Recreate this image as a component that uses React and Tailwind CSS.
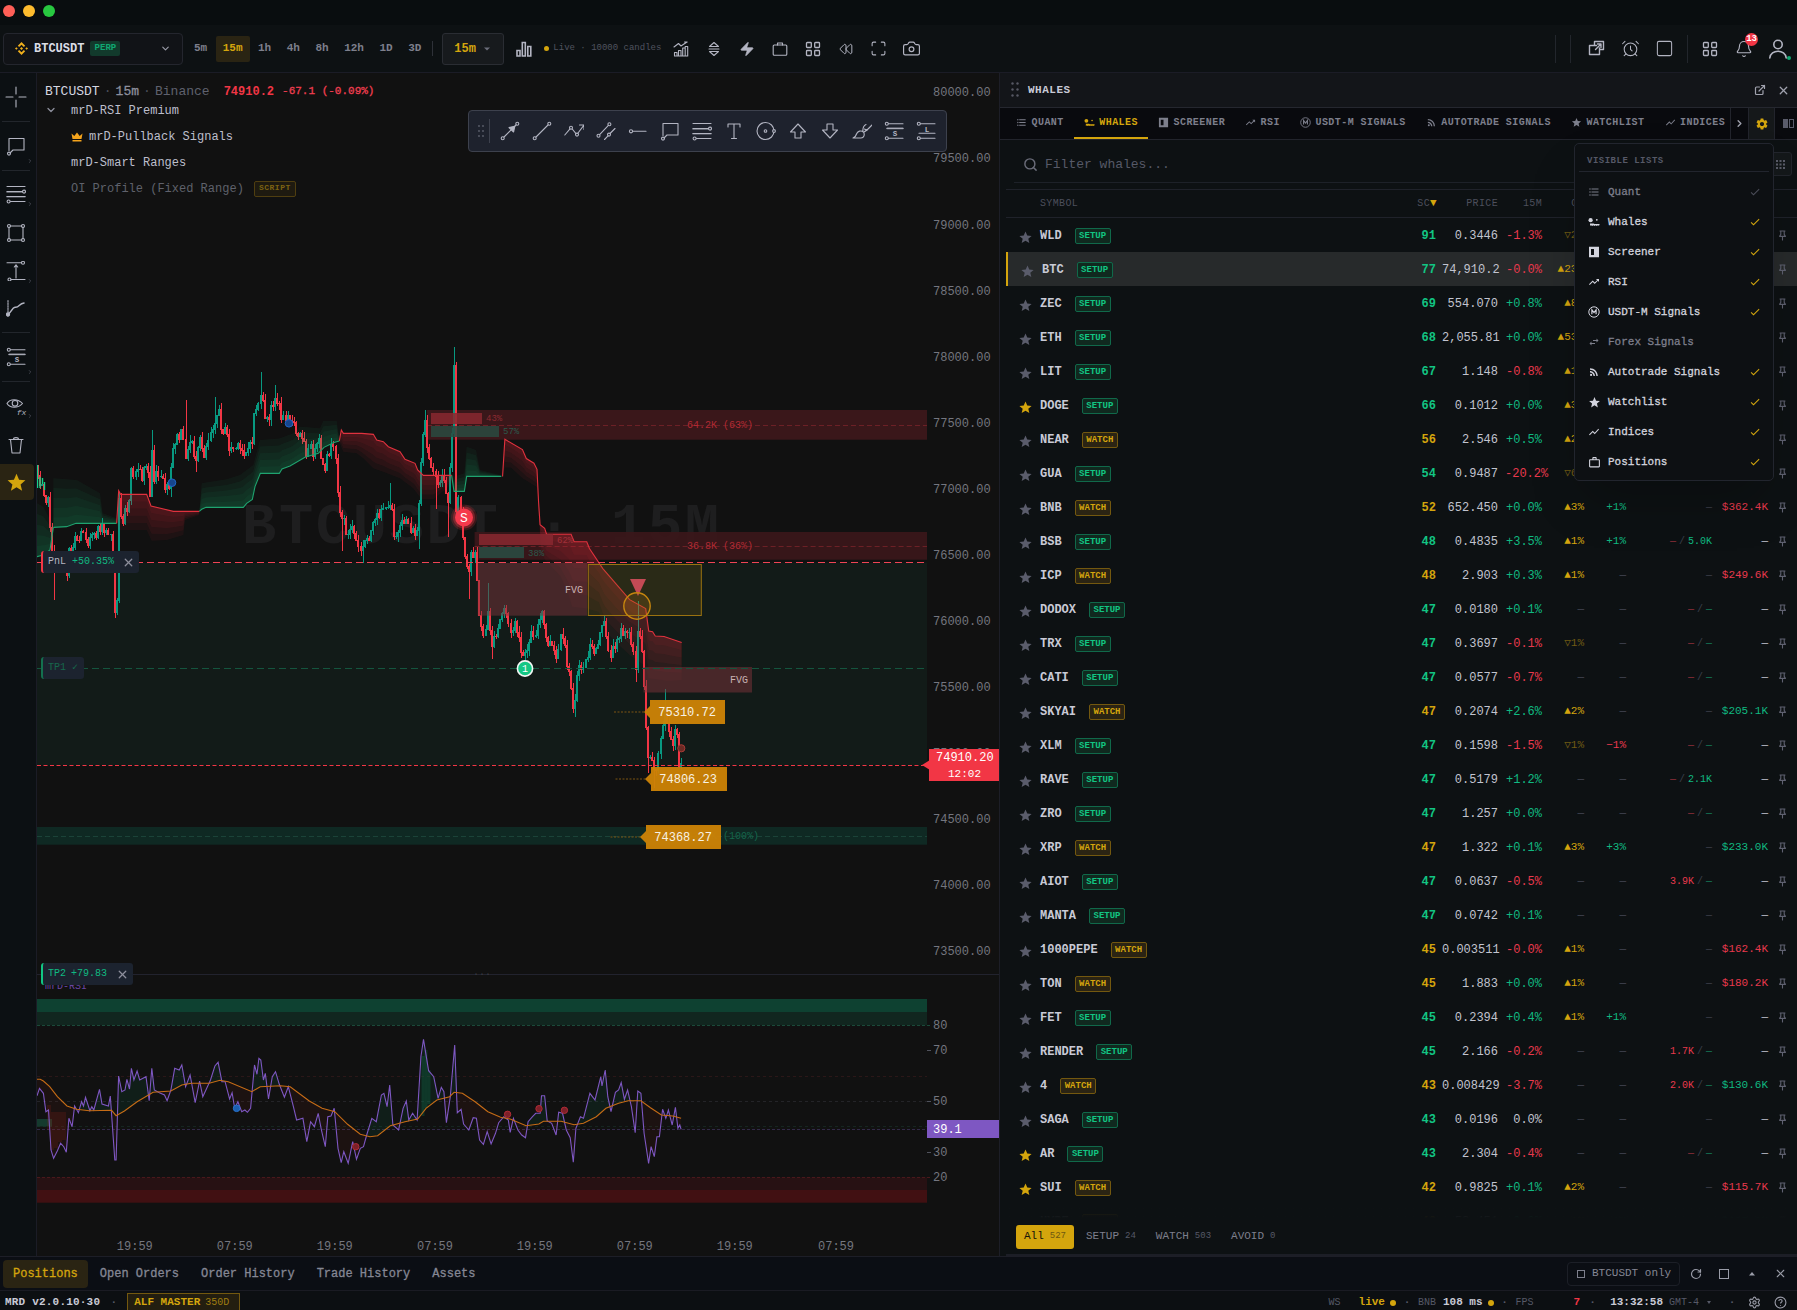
import React from "react";
import { ChevronDown, ChevronRight, Zap, Rewind, Maximize, Camera, Search, Bell, ExternalLink, X, AlarmClock, Square, RotateCw, Settings } from "lucide-react";
import { MdFormatListBulleted, MdTrendingUp, MdRssFeed, MdStar, MdShowChart, MdWorkOutline, MdSettings, MdSwapHoriz, MdCheck } from "react-icons/md";

const MONO = "'Liberation Mono', 'DejaVu Sans Mono', monospace";

/* ---------- small icons ---------- */
const S = ({ children, size = 20, className = "", sw = 1.1, vb = "0 0 20 20" }) => (
  <svg width={size} height={size} viewBox={vb} fill="none" stroke="currentColor" strokeWidth={sw} strokeLinecap="round" strokeLinejoin="round" className={"shrink-0 " + className}>
    {children}
  </svg>
);

const ArrowLineIcon = () => <S><circle cx="2.7" cy="17.3" r="1.5" /><circle cx="17.3" cy="2.7" r="1.5" /><path d="M4 16 16 4" /><path d="M14.8 5.2 13.6 11 9 6.6Z" fill="currentColor" /></S>;
const LineIcon = () => <S><circle cx="2.7" cy="17.3" r="1.5" /><circle cx="17.3" cy="2.7" r="1.5" /><path d="M4 16 16 4" /></S>;
const PathIcon = () => <S><path d="M0.8 14 6 7.8M8.2 8 12 12.6M14 12 20 4M15.5 4H20V8.5" /><circle cx="7" cy="6.8" r="1.5" /><circle cx="13" cy="13.6" r="1.5" /></S>;
const ParallelIcon = () => <S><path d="M3.6 13.6 12.4 4.4M14 12.5 19 7.5M12 14.8 8.5 18.5" /><circle cx="2.5" cy="14.8" r="1.5" /><circle cx="13.4" cy="3.2" r="1.5" /><circle cx="13" cy="13.6" r="1.5" /></S>;
const RayIcon = () => <S><circle cx="3" cy="10.3" r="1.6" /><path d="M4.8 10.3H18" /></S>;
const NoteIcon = () => <S><path d="M3 14.5V2.5H18V14H7L4 17" /><circle cx="3" cy="17.6" r="1.5" /></S>;
const FibIcon = () => <S><path d="M1 2.5H19M1 7.5H16.5M1 12.5H19M4.5 17.5H19" /><path d="M1 8H16.5M1 12.8H19" strokeWidth="1.6" opacity=".6" /><circle cx="18" cy="7.6" r="1.5" /><circle cx="2.6" cy="17.5" r="1.5" /></S>;
const TextIcon = () => <S><path d="M4 6V3H16V6M10 3V17.5M7.5 17.5H12.5" /></S>;
const CircleIcon = () => <S><circle cx="9.5" cy="10" r="8.5" /><circle cx="9.5" cy="10" r="1.3" /><circle cx="18" cy="10" r="1.4" fill="#1e222d" /></S>;
const UpIcon = () => <S><path d="M10 3 17.5 11H13V17H7V11H2.5Z" /></S>;
const DownIcon = () => <S><path d="M10 17 17.5 9H13V3H7V9H2.5Z" /></S>;
const BrushIcon = () => <S><path d="M1 17H9C12 17 13 13.5 11.5 11 9 9 5.5 10 4.5 13 4 15 2.5 16.5 1 17ZM11 11C10.5 7 12 4.5 14 3.5M12 11C15 9.5 18 6 20 4M12.5 8 15 9.5" /></S>;
const FibLetterIcon = ({ l }) => (
  <S><path d="M4.5 2.8H19M3 7.3H19M4.5 17.3H19" /><path d="M3 7.5H19" strokeWidth="1.4" opacity=".7" /><circle cx="2.8" cy="2.8" r="1.5" /><circle cx="2.8" cy="17.3" r="1.5" />
    <text x="11" y="15" fontSize="7.5" fontFamily={MONO} fontWeight="700" textAnchor="middle" fill="currentColor" stroke="none">{l}</text></S>
);
const FibLIcon = () => (
  <S><path d="M4.5 2.8H19M3 12.3H19M4.5 17.3H19" /><circle cx="2.8" cy="2.8" r="1.5" /><circle cx="2.8" cy="17.3" r="1.5" />
    <text x="11" y="10.5" fontSize="7.5" fontFamily={MONO} fontWeight="700" textAnchor="middle" fill="currentColor" stroke="none">L</text></S>
);
const CrossIcon = () => <S size={22} vb="0 0 22 22"><path d="M11 1V8M11 14V21M1 11H8M14 11H21" /></S>;
const RectIcon = () => <S size={20}><path d="M4.2 3H15.8M4.2 17H15.8M3 4.2V15.8M17 4.2V15.8" /><circle cx="3" cy="3" r="1.5" /><circle cx="17" cy="3" r="1.5" /><circle cx="3" cy="17" r="1.5" /><circle cx="17" cy="17" r="1.5" /></S>;
const RangeIcon = () => <S size={20}><path d="M1 1.8H15.5M5 18.5H19M10 17V4M8.3 6 10 3.8 11.7 6" /><circle cx="17" cy="1.8" r="1.5" /><circle cx="3.5" cy="18.5" r="1.5" /></S>;
const ProjIcon = () => <S size={20}><path d="M2 1.5V17" strokeDasharray="1.5 1" /><path d="M2 15C5 14 6 8.5 9 8.2 13 9 13 4.5 18 4" strokeWidth="1.5" /><circle cx="2" cy="15.5" r="1.6" fill="currentColor" /></S>;
const EyeFxIcon = () => <S size={22} vb="0 0 22 22"><path d="M2 8.5C5 3.5 13 3.5 17.5 8.5 13 13.5 5 13.5 2 8.5Z" /><circle cx="10" cy="8.3" r="2.8" />
  <text x="16.5" y="20" fontSize="8" fontFamily={MONO} fontStyle="italic" textAnchor="middle" fill="currentColor" stroke="none">fx</text></S>;
const TrashIcon = () => <S size={20}><path d="M3 4.5H17M4.5 4.5 6 18H14L15.5 4.5M7.5 4.3C7.5 2 12.5 2 12.5 4.3" /></S>;
const StarIcon = ({ size = 20, className }) => <svg width={size} height={size} viewBox="0 0 20 20" className={"shrink-0 " + className}><path fill="currentColor" d="M10 .8 12.7 7 19.4 7.6 14.3 12 15.9 18.6 10 15.1 4.1 18.6 5.7 12 .6 7.6 7.3 7Z" /></svg>;
const WhaleIcon = ({ size = 11 }) => <svg width={size} height={size} viewBox="0 0 12 12" fill="currentColor" className="shrink-0"><circle cx="2.6" cy="4.2" r="2.1" /><circle cx="8.8" cy="3.8" r=".9" /><path d="M2 7.4H5.5L6.5 7.9H11.5V9L10.7 9.8 9.8 9.2 8.7 9.9 7.6 9.2 6.4 9.9 5.3 9.2 4.2 9.9 3 9.2 2 9.8Z" /></svg>;
const ScreenerIcon = ({ size = 11 }) => <svg width={size} height={size} viewBox="0 0 12 12" className="shrink-0"><path fill="currentColor" fillRule="evenodd" d="M1 .8H11V11.2H1ZM3 3V9H6V3Z" /></svg>;
const MIcon = ({ size = 11 }) => <svg width={size} height={size} viewBox="0 0 12 12" fill="none" stroke="currentColor" className="shrink-0"><circle cx="6" cy="6" r="5.2" strokeWidth="1" /><path d="M3.9 8.3V3.8L6 6.6 8.1 3.8V8.3" strokeWidth="1.2" /></svg>;
const GridIcon = ({ size = 16 }) => <S size={size} vb="0 0 16 16" sw={1.3}><rect x="1.5" y="1.5" width="4.8" height="5" rx=".8" /><rect x="9.7" y="1.5" width="4.8" height="5" rx=".8" /><rect x="1.5" y="9.5" width="4.8" height="5" rx=".8" /><rect x="9.7" y="9.5" width="4.8" height="5" rx=".8" /></S>;
const PinIcon = () => <S size={11} vb="0 0 11 11" sw={1.1} className="ml-[2px] text-[#5f6170]"><path d="M3 1H8M3.8 1.2V4.4L2.6 6.4H8.4L7.2 4.4V1.2M5.5 6.6V10" /></S>;

/* ---------- chart data ---------- */
const lerpAt = (pts, x) => {
  if (x <= pts[0][0]) return pts[0][1];
  for (let i = 1; i < pts.length; i++) {
    if (x <= pts[i][0]) {
      const [x0, y0] = pts[i - 1];
      const [x1, y1] = pts[i];
      return x1 === x0 ? y1 : y0 + ((y1 - y0) * (x - x0)) / (x1 - x0);
    }
  }
  return pts[pts.length - 1][1];
};
const pairs = (s) => s.trim().split(/\s+/).map((p) => p.split(",").map(Number));
const mapA = ([x, y]) => [x / 3, 220 + y / 3];
const mapB = ([x, y]) => [400 + x / 2.613, 330 + y / 2.8];
const mapR = ([x, y]) => [x / 1.568, 900 + y / 3];

const closePath = [
  ...pairs("111,740 115,790 120,775 128,780 133,820 138,830 145,850 150,900 155,990 160,1050 170,1010 185,1020 200,1060 205,980 215,990 225,940 235,965 250,925 262,960 275,950 283,960 295,915 305,925 315,940 330,930 337,1000 343,1160 350,1165 353,1000 355,830 368,900 378,830 385,895 395,745 405,765 412,740 425,770 432,730 445,760 450,840 455,665 463,780 472,765 485,785 495,800 505,820 512,760 522,660 535,655 543,640 560,710 573,645 588,735 600,660 612,700 625,650 643,595 655,575 665,620 680,640 690,690 705,680 715,690 730,690 745,685 755,680 763,580 775,545 785,540 793,580 805,615 815,550 826,530 840,570 850,600 862,565 872,600 882,620 895,655 905,640 915,650 920,700 930,685 945,700 955,660 963,710 975,770 985,690 998,685 1008,730 1018,870 1030,900 1045,950 1056,910 1065,950 1075,985 1087,990 1095,960 1110,940 1125,910 1140,870 1150,855 1160,890 1168,835 1178,870 1182,940 1195,945 1205,920 1218,890 1230,920 1240,940 1255,935 1258,780 1265,730 1270,640 1275,600 1280,680 1290,715 1300,740 1310,810 1320,770 1335,775 1343,880 1350,740 1358,600 1363,440 1369,870 1375,830 1385,900 1390,1000 1405,1075 1412,1000 1425,990 1432,1080").map(mapA),
  ...pairs("205,800 215,840 222,850 230,790 240,880 252,860 262,810 275,770 290,860 300,810 310,870 315,905 328,915 338,860 355,840 372,795 382,870 395,880 408,925 420,865 430,890 440,960 448,1010 455,1065 460,985 470,950 485,930 495,890 510,900 520,860 535,820 550,920 565,860 580,840 590,860 600,835 610,900 617,970 621,850 630,860 637,980 643,1110 650,1230 655,1160 665,1240 675,1190 685,1120 692,1060 700,1110 712,1180 722,1090 727,1200 736,1218").map(mapB),
];
const highs = [...pairs("111,735 556,540 454,630 643,530 661,548 781,457 826,495 1363,382 1369,425 1168,790 1276,570").map(mapA), ...pairs("228,707 621,760 694,1005").map(mapB)];
const lows = [...pairs("160,1140 349,1183 1087,1030 1307,868 1405,1138 1345,950 1025,993 1255,988 586,755 512,830").map(mapA), ...pairs("239,922 455,1083 650,1240 665,1283 617,986").map(mapB)];

const STEP = 2.0835;
const candles = (() => {
  let seed = 7;
  const rnd = () => ((seed = (seed * 1103515245 + 12345) % 2147483648) / 2147483648);
  const out = [];
  let prev = lerpAt(closePath, 36);
  for (let x = 37.6; x < 682.5; x += STEP) {
    const c = lerpAt(closePath, x) + (rnd() - 0.5) * 12;
    let hi = Math.min(prev, c) - rnd() * 6.5;
    let lo = Math.max(prev, c) + rnd() * 6.5;
    highs.forEach(([hx, hy]) => { if (Math.abs(hx - x) <= STEP / 2) hi = Math.min(hi, hy); });
    lows.forEach(([lx, ly]) => { if (Math.abs(lx - x) <= STEP / 2) lo = Math.max(lo, ly); });
    out.push({ x, o: prev, c, hi, lo });
    prev = c;
  }
  return out;
})();
const candlePath = (up, wick) =>
  candles.filter((k) => (k.c <= k.o) === up).map((k) => {
    const px = Math.round(k.x);
    return wick
      ? `M${px + 0.5} ${k.hi.toFixed(1)}V${k.lo.toFixed(1)}`
      : `M${px} ${Math.min(k.o, k.c).toFixed(1)}V${(Math.max(k.o, k.c) + 1).toFixed(1)}`;
  }).join("");

const bands = [
  { c: "g", m: mapA, l: "111,1010 130,1005 150,990 160,922", o: "111,850 130,860 150,900 160,910" },
  { c: "g", m: mapA, l: "160,922 200,920 228,910 350,910", o: "160,775 230,780 300,820 308,880 350,895" },
  { c: "r", m: mapA, l: "350,910 356,812 362,823 440,823 453,858 520,874 598,874", o: "350,912 356,930 440,930 455,962 500,960 550,945 555,900 598,885" },
  { c: "g", m: mapA, l: "598,874 605,868 618,862 730,862 740,850 757,838 765,800 781,760 838,760 846,747 870,738 915,712 955,700 972,682 1000,668 1018,663", o: "598,872 605,790 680,778 720,765 760,735 780,660 840,655 880,640 900,620 960,625 970,603 1010,603 1018,655" },
  { c: "r", m: mapA, l: "1018,663 1024,630 1030,640 1085,640 1120,643 1130,660 1150,665 1165,680 1200,695 1215,718 1245,730 1253,750 1270,766 1355,766", o: "1018,665 1030,695 1070,700 1090,715 1120,745 1150,755 1200,775 1240,805 1265,838 1300,838 1345,800 1355,790" },
  { c: "g", m: mapA, l: "1355,766 1362,814 1393,814 1400,769 1504,769", o: "1355,760 1362,770 1393,760 1400,680 1428,690 1440,750 1504,766" },
  { c: "r", m: mapB, l: "268,410 274,306 320,335 330,360 350,373 358,390 362,480 366,545 378,555 383,572 447,572 455,593 488,593 495,612 530,668 600,755 642,780 650,843 660,845 667,857 690,858 736,875", o: "268,410 274,385 290,385 320,415 358,440 368,620 380,645 420,690 440,740 450,775 490,780 520,790 535,840 560,870 600,910 640,940 650,975 700,982 736,980" },
].map((b) => {
  const line = pairs(b.l).map(b.m);
  const outer = pairs(b.o).map(b.m);
  const xs = [...new Set([...line, ...outer].map((p) => p[0]))].sort((p, q) => p - q);
  const polys = [1, 2, 3, 4, 5].map((k) => {
    const back = xs.slice().reverse().map((x) => {
      const a = lerpAt(line, x);
      return `${x.toFixed(1)},${(a + ((lerpAt(outer, x) - a) * k) / 5).toFixed(1)}`;
    });
    return [...line.map((p) => p.map((v) => v.toFixed(1)).join(",")), ...back].join(" ");
  });
  return { color: b.c === "g" ? "#1fa36f" : "#e0323e", line: line.map((p) => p.join(",")).join(" "), polys };
});

const rsi = pairs("58,587 62,565 68,580 72,635 76,630 80,750 84,775 90,752 95,730 100,740 104,757 108,655 113,680 117,618 123,638 128,605 131,618 134,592 141,632 144,620 147,630 156,568 160,612 170,618 173,588 180,780 182,780 186,528 191,575 196,570 199,538 203,567 206,505 210,540 215,513 219,540 229,530 234,602 238,505 242,570 250,578 258,585 262,602 268,570 274,505 281,510 285,495 291,560 298,525 306,608 313,543 318,590 330,540 337,498 342,487 348,545 353,545 360,597 364,578 368,625 373,605 379,635 384,630 388,637 393,625 399,495 403,523 406,475 409,480 413,540 416,520 421,597 427,530 432,515 438,553 446,592 452,560 460,620 465,660 475,655 481,725 487,665 493,680 499,640 504,690 510,740 514,650 519,648 524,625 530,745 535,788 539,755 546,790 553,725 559,778 565,745 570,740 575,705 583,655 590,665 598,585 602,580 607,620 611,555 616,675 625,690 632,625 637,603 641,660 647,640 654,660 660,470 664,418 672,512 680,530 687,595 692,562 696,575 700,668 706,590 713,435 717,638 723,628 727,672 735,690 742,653 747,655 752,720 758,733 764,695 770,732 777,700 782,668 790,650 797,660 800,697 805,655 812,690 818,705 824,713 828,665 835,650 840,640 847,640 849,587 854,587 858,663 865,670 872,705 876,637 882,640 888,690 894,713 899,787 903,685 910,650 915,655 925,580 933,600 942,530 944,558 949,510 953,590 958,635 965,577 970,570 974,548 979,598 984,570 990,620 996,698 1000,573 1005,580 1010,700 1017,790 1021,740 1026,770 1030,710 1034,710 1039,628 1044,655 1048,630 1054,675 1059,622 1063,685 1066,675 1068,688").map(mapR);
const ma = pairs("58,538 63,538 68,543 78,560 90,590 105,618 120,628 140,632 175,631 182,647 195,633 215,605 240,577 268,573 285,555 300,550 328,550 345,541 358,545 395,575 408,560 440,557 455,560 485,603 505,625 525,635 545,673 565,703 580,710 592,707 612,677 635,665 655,657 668,625 685,600 705,590 712,577 725,580 745,605 765,635 785,652 800,657 825,677 845,672 852,664 880,664 900,674 915,670 935,650 950,625 970,610 985,602 1005,602 1020,623 1037,645 1055,648 1068,655").map(mapR);
const fillPath = (above) => {
  let d = "";
  for (let x = 37; x < 681; x += 1) {
    const a = lerpAt(rsi, x);
    const b = lerpAt(ma, x);
    if ((a < b) === above && Math.abs(a - b) > 1) d += `M${x + 0.5} ${a.toFixed(1)}V${b.toFixed(1)}`;
  }
  return d;
};
const str = (pts) => pts.map((p) => p.map((v) => v.toFixed(1)).join(",")).join(" ");

const T = ({ x, y, size = 12, fill = "#74767f", anchor = "start", weight = 400, children, ...r }) => (
  <text x={x} y={y} dy="0.34em" fontSize={size} fill={fill} textAnchor={anchor} fontWeight={weight} fontFamily={MONO} {...r}>{children}</text>
);
const PriceLabel = ({ x, y, w, text, from }) => (
  <g>
    <path d={`M${from} ${y + 12}H${x - 5}`} stroke="#7d5412" strokeDasharray="2 1.5" />
    <path d={`M${x - 6} ${y + 12}L${x} ${y + 6}V${y}H${x + w}V${y + 24}H${x}V${y + 18}Z`} fill="#cc8206" fillOpacity=".96" />
    <T x={x + 8.3} y={y + 12} fill="#f8f2e4">{text}</T>
  </g>
);

function Chart() {
  return (
    <svg width="962" height="1183" viewBox="37 73 962 1183" className="block">
      <rect x="37" y="562.5" width="890" height="203" fill="#121b18" />
      <text x="242" y="542.5" fontSize="57" textLength="477" fontWeight="700" fontFamily={MONO} fill="#1e1e1f" xmlSpace="preserve">BTCUSDT · 15M</text>

      <rect x="427" y="410" width="500" height="29.7" fill="#3a171a" />
      <rect x="474.6" y="532" width="452.4" height="27.7" fill="#3a171a" fillOpacity=".95" />
      <rect x="37" y="827" width="890" height="17.7" fill="#0f2923" />
      <path d="M427 425.5H927M474.6 546.5H927" stroke="#6c2026" strokeDasharray="5 3" />
      <path d="M37 836.5H927" stroke="#1b4338" strokeDasharray="5 3" />

      <g shapeRendering="crispEdges">
        <path d={candlePath(true, true)} stroke="#089981" strokeWidth="1" />
        <path d={candlePath(false, true)} stroke="#f23645" strokeWidth="1" />
        <path d={candlePath(true, false)} stroke="#089981" strokeWidth="2" />
        <path d={candlePath(false, false)} stroke="#f23645" strokeWidth="2" />
      </g>
      <path d="M37.5 465V488M40 477V488M42.5 478V484M44.5 482V490" stroke="#14d28a" strokeWidth="1.4" />

      {bands.map((b, i) => (
        <g key={i}>
          {b.polys.map((p, k) => <polygon key={k} points={p} fill={b.color} fillOpacity=".068" />)}
          <polyline points={b.line} fill="none" stroke={b.color} strokeWidth="1.1" />
        </g>
      ))}

      <rect x="431" y="413" width="51" height="11" fill="#8a2830" fillOpacity=".85" />
      <rect x="431" y="426" width="68" height="11" fill="#2a4a41" fillOpacity=".85" />
      <rect x="479" y="534" width="74" height="11" fill="#8a2830" fillOpacity=".85" />
      <rect x="479" y="547" width="45" height="11" fill="#2a4a41" fillOpacity=".9" />
      <T x={486} y={418} size={9} fill="#8c2a31">43%</T>
      <T x={503} y={431} size={9} fill="#2c594c">57%</T>
      <T x={557} y={540} size={9} fill="#a0303a">62%</T>
      <T x={528} y={553} size={9} fill="#2c594c">38%</T>
      <T x={687} y={425} size={10} fill="#b02a33">64.2K (63%)</T>
      <T x={687} y={546} size={10} fill="#b02a33">36.8K (36%)</T>

      <rect x="477.7" y="563" width="109.3" height="52.7" fill="#7a3339" fillOpacity=".5" />
      <rect x="643.5" y="667" width="108.5" height="25.5" fill="#7a3339" fillOpacity=".52" />
      <T x={565} y={590} size={10} fill="#c9b4b4">FVG</T>
      <T x={730} y={680} size={10} fill="#c9b4b4">FVG</T>
      <rect x="588.3" y="564.5" width="113" height="51" fill="#8a6a14" fillOpacity=".2" stroke="#9a7210" />

      <path d="M37 562.5H927" stroke="#ef4455" strokeDasharray="7 4" />
      <path d="M37 668.5H927" stroke="#14553e" strokeDasharray="7 4" />
      <path d="M37 765.5H924" stroke="#f23645" strokeDasharray="4 2.5" />

      <path d="M630 579H646L638 596Z" fill="#c44a55" />
      <circle cx="637" cy="606" r="13.2" fill="#d28a10" fillOpacity=".16" stroke="#c6860f" strokeWidth="1.4" />

      <circle cx="172" cy="482.7" r="3.8" fill="#17458c" stroke="#1f66c9" />
      <circle cx="289" cy="423.3" r="3.8" fill="#17458c" stroke="#1f66c9" />
      <circle cx="681.3" cy="748.3" r="3.6" fill="#6b2a24" stroke="#a83a36" />
      <circle cx="464" cy="517.5" r="13" fill="#f23645" fillOpacity=".18" />
      <circle cx="464" cy="517.5" r="11" fill="#f23645" fillOpacity=".35" />
      <circle cx="464" cy="517.5" r="9" fill="#f5394c" />
      <T x={464} y={517.8} size={13} fill="#fff" anchor="middle">S</T>
      <circle cx="525" cy="668.5" r="7.6" fill="#14c784" stroke="#f2f5f4" strokeWidth="1.6" />
      <T x={525} y={669} size={10} fill="#fff" anchor="middle">1</T>

      <PriceLabel x={650} y={700} w={75} text="75310.72" from={614} />
      <PriceLabel x={651} y={767} w={76} text="74806.23" from={615.5} />
      <T x={687} y={836} size={10} fill="#15664c" xmlSpace="preserve">43.2K (100%)</T>
      <PriceLabel x={646} y={825} w={75} text="74368.27" from={610.5} />

      {Array.from({ length: 14 }, (_, i) => (
        <T key={i} x={933} y={92.3 + i * 66.07}>{(80000 - i * 500).toFixed(2)}</T>
      ))}
      <path d="M922 765 930 760V770Z" fill="#f23645" />
      <rect x="929" y="749" width="70" height="32" fill="#f23645" />
      <T x={936} y={757.3} fill="#fff">74910.20</T>
      <T x={948} y={773} size={11} fill="#fff">12:02</T>

      <path d="M37 974.5H999" stroke="#22232e" />
      <T x={482} y={974} size={10} fill="#3a3b44" anchor="middle">···</T>

      <T x={45} y={985.5} size={10} fill="#6a45a3">mrD-RSI</T>
      <rect x="37" y="999" width="890" height="13" fill="#0e4131" />
      <rect x="37" y="1012" width="890" height="13.3" fill="#11261f" />
      <rect x="37" y="1177.3" width="890" height="12.7" fill="#271113" />
      <rect x="37" y="1190" width="890" height="12.7" fill="#411012" />
      <path d="M37 1025.5H931" stroke="#1a4a39" strokeDasharray="3 2" />
      <path d="M37 1177.5H931" stroke="#4a181b" strokeDasharray="3 2" />
      <path d="M37 1076.5H927" stroke="#2b1718" strokeDasharray="3 3" />
      <path d="M37 1101.5H927" stroke="#242428" strokeDasharray="3 3" />
      <path d="M37 1126.5H927" stroke="#15261f" strokeDasharray="3 3" />
      <path d="M37 1129.5H927" stroke="#332a49" strokeDasharray="3 2" />
      <path d="M927 1050.5H931M927 1101.5H931M927 1152.5H931" stroke="#50525c" />
      <rect x="37" y="1119" width="15" height="7.5" fill="#174536" fillOpacity=".8" />
      <path d={fillPath(true)} stroke="#0f6b48" strokeOpacity=".15" />
      <path d="M423 1056V1116M426 1050V1108M429 1070V1104" stroke="#0f6b48" strokeOpacity=".35" strokeWidth="3" />
      <path d="M49 1105V1130M52 1112V1150M56 1112V1148M60 1112V1142M64 1112V1140" stroke="#8a2018" strokeOpacity=".22" strokeWidth="4" />
      <path d={fillPath(false)} stroke="#a3241c" strokeOpacity=".08" />
      <polyline points={str(rsi)} fill="none" stroke="#7e57c2" strokeWidth="1.1" />
      <polyline points={str(ma)} fill="none" stroke="#c66c16" strokeWidth="1.1" />
      <circle cx="236.6" cy="1108.3" r="3.3" fill="#1c5fb0" stroke="#2874cf" />
      {[[355.8, 1146.7], [507.6, 1114.3], [539, 1108.7], [564.4, 1110.3]].map(([x, y]) => <circle key={x} cx={x} cy={y} r="3.2" fill="#7c2029" stroke="#b02b36" />)}
      {[[80, 1024.8], [70, 1050], [50, 1100.8], [30, 1151.8], [20, 1176.8]].map(([v, y]) => <T key={v} x={933} y={y}>{v}</T>)}
      <rect x="927" y="1120" width="72" height="18" fill="#7e57c2" />
      <T x={933} y={1129} fill="#fff">39.1</T>
      {[134.8, 234.8, 334.8, 435, 534.8, 634.8, 734.8, 836].map((x, i) => <T key={x} x={x} y={1245.5} anchor="middle">{i % 2 ? "07:59" : "19:59"}</T>)}
    </svg>
  );
}

/* ---------- watch table ---------- */
const D = "—";
const rows = [
  ["WLD", "S", 91, "0.3446", "-1.3%", "▽2%", D, D, D],
  ["BTC", "S", 77, "74,910.2", "-0.0%", "▲23%", D, D, D],
  ["ZEC", "S", 69, "554.070", "+0.8%", "▲8%", D, D, D],
  ["ETH", "S", 68, "2,055.81", "+0.0%", "▲53%", D, D, D],
  ["LIT", "S", 67, "1.148", "-0.8%", "▲1%", D, D, D],
  ["DOGE", "S", 66, "0.1012", "+0.0%", "▲3%", D, D, D, 1],
  ["NEAR", "W", 56, "2.546", "+0.5%", "▲2%", D, D, D],
  ["GUA", "S", 54, "0.9487", "-20.2%", "▽6%", D, D, D],
  ["BNB", "W", 52, "652.450", "+0.0%", "▲3%", "+1%", D, "r$362.4K"],
  ["BSB", "S", 48, "0.4835", "+3.5%", "▲1%", "+1%", [D, "5.0K"], D],
  ["ICP", "W", 48, "2.903", "+0.3%", "▲1%", D, D, "r$249.6K"],
  ["DODOX", "S", 47, "0.0180", "+0.1%", D, D, [D, D], D],
  ["TRX", "S", 47, "0.3697", "-0.1%", "▽1%", D, [D, D], D],
  ["CATI", "S", 47, "0.0577", "-0.7%", D, D, [D, D], D],
  ["SKYAI", "W", 47, "0.2074", "+2.6%", "▲2%", D, D, "g$205.1K"],
  ["XLM", "S", 47, "0.1598", "-1.5%", "▽1%", "−1%", [D, D], D],
  ["RAVE", "S", 47, "0.5179", "+1.2%", D, D, [D, "2.1K"], D],
  ["ZRO", "S", 47, "1.257", "+0.0%", D, D, [D, D], D],
  ["XRP", "W", 47, "1.322", "+0.1%", "▲3%", "+3%", D, "g$233.0K"],
  ["AIOT", "S", 47, "0.0637", "-0.5%", D, D, ["3.9K", D], D],
  ["MANTA", "S", 47, "0.0742", "+0.1%", D, D, D, D],
  ["1000PEPE", "W", 45, "0.003511", "-0.0%", "▲1%", D, D, "r$162.4K"],
  ["TON", "W", 45, "1.883", "+0.0%", "▲1%", D, D, "r$180.2K"],
  ["FET", "S", 45, "0.2394", "+0.4%", "▲1%", "+1%", D, D],
  ["RENDER", "S", 45, "2.166", "-0.2%", D, D, ["1.7K", D], D],
  ["4", "W", 43, "0.008429", "-3.7%", D, D, ["2.0K", D], "g$130.6K"],
  ["SAGA", "S", 43, "0.0196", "0.0%", D, D, D, D],
  ["AR", "S", 43, "2.304", "-0.4%", D, D, [D, D], D, 1],
  ["SUI", "W", 42, "0.9825", "+0.1%", "▲2%", D, D, "r$115.7K", 1],
  ["HYPE", "W", 42, "58.451", "+0.0%", "▲1%", "+1%", D, "g$107.0K"],
];
const cols = "grid grid-cols-[14px_minmax(0,1fr)_30px_56px_37px_35px_35px_79px_49px_14px] items-center gap-x-[7px] pr-2 whitespace-nowrap";
const tone = (v) => (v === D ? "text-[#444754]" : /^[-−]/.test(v) ? "text-[#e8394d]" : v[0] === "+" ? "text-[#10b981]" : "text-[#c2c4cf]");

function Row({ r, sel }) {
  const [sym, t, sc, price, chg, oi, d, ls, val, fav] = r;
  const setup = t === "S";
  return (
    <div className={`${cols} h-[34px] shrink-0 pt-px text-xs text-[#c2c4cf] ${sel ? "border-l-2 border-[#d4a50d] bg-[#272a2b] pl-[13px]" : "pl-[13px]"}`}>
      <StarIcon size={13} className={`mt-[4px] ${fav ? "text-[#d4a50d]" : "text-[#5a5c6b]"}`} />
      <div className="flex items-center gap-[13px]">
        <span className="font-bold text-[#c9cad6]">{sym}</span>
        <span className={`flex h-4 w-9 items-center justify-center rounded-[2px] border text-[9px] font-bold ${setup ? "border-[#10694a] bg-[#10291f] text-[#12c583]" : "border-[#73580f] bg-[#2b2413] text-[#d4a50d]"}`}>{setup ? "SETUP" : "WATCH"}</span>
      </div>
      <span className={`-mr-px text-right font-bold ${setup ? "text-[#12c583]" : "text-[#d4a50d]"}`}>{sc}</span>
      <span className="text-right">{price}</span>
      <span className={`text-right ${tone(chg)}`}>{chg}</span>
      <span className={`text-right text-[11px] ${oi === D ? "text-[#444754]" : oi[0] === "▽" ? "text-[#6f5a14]" : "text-[#d4a50d]"}`}>{oi}</span>
      <span className={`text-right text-[11px] ${tone(d)}`}>{d}</span>
      {ls === D ? <span className="text-right text-[10px] text-[#3c3f4a]">{D}</span> : (
        <span className="flex justify-end gap-[3px] text-[10px]">
          <span className={ls[0] === D ? "text-[#8f2f3a]" : "text-[#e8394d]"}>{ls[0]}</span><span className="text-[#3c3f4a]">/</span>
          <span className={ls[1] === D ? "text-[#157a57]" : "text-[#10b981]"}>{ls[1]}</span>
        </span>
      )}
      <span className={`text-right text-[11px] ${val === D ? "text-[#c2c4cf]" : val[0] === "r" ? "text-[#e8394d]" : "text-[#10b981]"}`}>{val === D ? D : val.slice(1)}</span>
      <PinIcon />
    </div>
  );
}

const tabs = [
  ["QUANT", <MdFormatListBulleted size={11} />], ["WHALES", <WhaleIcon />], ["SCREENER", <ScreenerIcon />], ["RSI", <MdTrendingUp size={11} />],
  ["USDT-M SIGNALS", <MIcon />], ["AUTOTRADE SIGNALS", <MdRssFeed size={11} />], ["WATCHLIST", <MdStar size={11} />], ["INDICES", <MdShowChart size={11} />],
];
const lists = [
  ["Quant", <MdFormatListBulleted size={12} />, "off"], ["Whales", <WhaleIcon size={12} />], ["Screener", <ScreenerIcon size={12} />], ["RSI", <MdTrendingUp size={12} />],
  ["USDT-M Signals", <MIcon size={12} />], ["Forex Signals", <MdSwapHoriz size={12} />, "none"], ["Autotrade Signals", <MdRssFeed size={12} />],
  ["Watchlist", <MdStar size={13} />], ["Indices", <MdShowChart size={12} />], ["Positions", <MdWorkOutline size={13} />],
];

function VisibleLists() {
  return (
    <div className="absolute top-[70px] right-[23px] h-[338px] w-[200px] rounded-[5px] border border-[#22252e] bg-[#0d1013] px-1 pt-[9px] shadow-2xl">
      <div className="flex h-[19px] items-start border-b border-[#22252e] px-2 pt-[4px] text-[9px] font-bold tracking-[0.5px] text-[#565967]">VISIBLE LISTS</div>
      <div className="pt-[5px]">
        {lists.map(([name, icon, st]) => (
          <div key={name} className={`flex h-[30px] items-center px-2 text-[11px] [-webkit-text-stroke:0.3px] ${st ? "text-[#7d7f8c]" : "text-[#d3d4de]"}`}>
            <span className="flex w-[21px] items-center pl-[1px]">{icon}</span>
            <span className="flex-1">{name}</span>
            {st !== "none" && <MdCheck size={12} className={st === "off" ? "text-[#4a4c58]" : "text-[#d4a50d]"} />}
          </div>
        ))}
      </div>
    </div>
  );
}

function WhalesPanel() {
  return (
    <section className="relative flex w-[798px] shrink-0 flex-col border-l border-[#1d1e27] bg-[#0d1113]">
      <div className="flex h-[35px] shrink-0 items-center border-b border-[#25272f] bg-[#131519] pr-[7px] pl-[11px]">
        <svg width="8" height="16" className="text-[#565863]" fill="currentColor">{[1.5, 7.5, 13.5].map((y) => [1.5, 6.5].map((x) => <circle key={x + "-" + y} cx={x} cy={y} r="1.2" />))}</svg>
        <span className="ml-[9px] flex-1 text-[11px] font-bold tracking-[0.5px] text-[#c9cad6]">WHALES</span>
        <ExternalLink size={12} strokeWidth={2.4} className="mr-[11px] text-[#a0a2ae]" />
        <X size={13} strokeWidth={2.4} className="text-[#a0a2ae]" />
      </div>
      <div className="flex h-8 shrink-0 overflow-hidden border-b border-[#22242c] bg-[#090a0e]">
        <div className="flex w-[730px] overflow-hidden pl-[6px]">
          {tabs.map(([name, icon]) => (
            <div key={name} className={`flex shrink-0 items-center gap-[4.5px] border-b-2 px-[10px] text-[10px] font-bold tracking-[0.45px] whitespace-nowrap ${name === "WHALES" ? "border-[#d4a50d] text-[#d4a50d]" : "border-transparent text-[#7d7f8c]"}`}>{icon}{name}</div>
          ))}
        </div>
        <div className="flex w-[19px] items-center justify-center border-x border-[#22242c] text-[#a0a2ae]"><ChevronRight size={11} strokeWidth={3} /></div>
        <div className="flex w-[26px] items-center justify-center border-r border-[#22242c] bg-[#15181a] text-[#d4a50d]"><MdSettings size={14} /></div>
        <div className="flex flex-1 items-center justify-center pl-1 text-[#5a5c6b]"><svg width="11" height="9"><rect width="5" height="9" fill="currentColor" /><rect x="6.5" y=".5" width="4" height="8" fill="none" stroke="currentColor" /></svg></div>
      </div>
      <div className="flex h-[49px] shrink-0 items-stretch pr-[5px] pl-[14px]">
        <div className="flex h-[43px] flex-1 items-center gap-[7px] border-b border-[#1d2128] pt-[6px] pl-[9px] text-[13px] text-[#565967]">
          <Search size={15} strokeWidth={2.3} className="text-[#6b6d7a]" />Filter whales...
        </div>
        <div className="mt-3 ml-3 flex h-6 w-[22px] items-center justify-center rounded-[3px] border border-[#22252c] bg-[#14181a] text-[#5a5c68]">
          <svg width="10" height="9" fill="currentColor">{[0, 3.5, 7].map((y) => [0, 3.5, 7].map((x) => <rect key={x + "-" + y} x={x} y={y} width="2" height="2" />))}</svg>
        </div>
      </div>
      <div className="ml-[6px] flex min-h-0 flex-1 flex-col">
        <div className={`${cols} h-[29px] shrink-0 border-y border-[#1f222a] pl-[13px] text-[10px] tracking-[0.35px] text-[#4c4f5c]`}>
          <span /><span>SYMBOL</span><span className="-mr-px flex items-center justify-end">SC<span className="-mr-px text-[11px] text-[#d4a50d]">▼</span></span><span className="text-right">PRICE</span><span className="text-right">15M</span><span className="text-right">OI</span>
        </div>
        <div className="relative flex min-h-0 flex-1 flex-col overflow-hidden">
          {rows.map((r, i) => <Row key={r[0]} r={r} sel={i === 1} />)}
          <div className="absolute inset-x-0 bottom-0 h-4 bg-linear-to-b from-[#0d1113]/60 to-[#0d1113]" />
        </div>
        <div className="flex h-[38px] shrink-0 items-center gap-1 border-b-2 border-[#1c1e26] pt-px pl-[10px] text-[11px] text-[#7d7f8c]">
          <div className="flex h-6 w-[58px] items-center justify-center gap-[6px] rounded-[3px] bg-[#d4a50d] text-[#15130a]">All <span className="text-[9px] text-[#6d5710]">527</span></div>
          {[["SETUP", "24"], ["WATCH", "503"], ["AVOID", "0"]].map(([a, b]) => (
            <div key={a} className="flex items-center gap-[6px] px-2">{a}<span className="text-[9px] text-[#565967]">{b}</span></div>
          ))}
        </div>
      </div>
      <VisibleLists />
    </section>
  );
}

/* ---------- chrome ---------- */
const Slot = ({ children, h = "h-[38px]", more }) => (
  <div className={`relative flex ${h} w-8 shrink-0 items-center justify-center text-[#b3b5c2]`}>
    {children}
    {more && <ChevronRight size={6} className="absolute right-[-1px] bottom-[6px] text-[#6b6d7a]" />}
  </div>
);
const Sep = () => <div className="ml-[2px] h-px w-7 shrink-0 bg-[#22262c]" />;

function Sidebar() {
  return (
    <aside className="flex w-[37px] shrink-0 flex-col border-r border-[#1b1c26] bg-[#0c1013]">
      <Slot h="h-12"><CrossIcon /></Slot><Sep />
      <Slot h="h-12" more><NoteIcon /></Slot><Sep />
      <div className="flex flex-col py-1"><Slot more><FibIcon /></Slot><Slot h="h-[39px]"><RectIcon /></Slot><Slot more><RangeIcon /></Slot><Slot><ProjIcon /></Slot></div><Sep />
      <Slot h="h-12" more><FibLetterIcon l="S" /></Slot><Sep />
      <div className="flex flex-col pt-1"><Slot h="h-[39px]" more><EyeFxIcon /></Slot><Slot h="h-[39px]"><TrashIcon /></Slot>
        <div className="flex h-9 w-[34px] items-center justify-center rounded-r-[4px] bg-[#2a2413] text-[#d4a50d]"><StarIcon size={19} className="-ml-[2px]" /></div></div>
    </aside>
  );
}

const IconBtn = ({ children }) => <div className="flex w-[33px] items-center justify-center">{children}</div>;

function TopBar() {
  return (
    <header className="flex h-12 shrink-0 items-center border-b border-[#1b1c26] bg-[#0d1113] pl-[3px] text-[#b3b5c2]">
      <div className="flex h-8 w-[180px] items-center rounded-[4px] border border-[#24262e] bg-[#111317] pr-2 pl-[11px]">
        <svg width="13" height="13" viewBox="0 0 24 24" fill="#f0b01c"><path d="M12 0 18.8 6.8 16.3 9.3 12 5 7.7 9.3 5.2 6.8ZM2.5 9.5 5 12 2.5 14.5 0 12ZM12 9.2 14.8 12 12 14.8 9.2 12ZM21.5 9.5 24 12 21.5 14.5 19 12ZM12 24 5.2 17.2 7.7 14.7 12 19 16.3 14.7 18.8 17.2Z" /></svg>
        <span className="ml-[6px] text-xs font-bold text-[#dcdde6]">BTCUSDT</span>
        <span className="ml-[6px] flex h-[15px] w-[30px] items-center justify-center rounded-[2px] bg-[#123a2c] text-[9px] font-bold text-[#10a873]">PERP</span>
        <span className="flex-1" /><ChevronDown size={11} strokeWidth={2.5} className="mr-[3px] text-[#9a9ca8]" />
      </div>
      <div className="ml-[4px] flex gap-[1.5px] text-[11px] font-bold text-[#7d7f8c]">
        {["5m", "15m", "1h", "4h", "8h", "12h", "1D", "3D"].map((t) => <div key={t} className={`flex h-[26px] items-center rounded-[2px] px-[7px] ${t === "15m" ? "bg-[#2a2413] text-[#d4a50d]" : ""}`}>{t}</div>)}
      </div>
      <div className="ml-[4px] h-[15px] w-px bg-[#2e3138]" />
      <div className="ml-[9px] flex h-8 w-[62px] items-center gap-2 rounded-[3px] border border-[#2a2d33] bg-[#171a1d] pl-[11px] text-xs font-bold text-[#d4a50d]">15m
        <svg width="6" height="4"><path d="M0 .5H6L3 3.5Z" fill="#6b6d7a" /></svg></div>
      <svg width="16" height="16" viewBox="0 0 16 16" fill="none" stroke="#b3b5c2" strokeWidth="1.6" className="ml-[12px]"><path d="M1 9.5H4V15H1ZM6.3 1.5H9.3V15H6.3ZM11.8 5.5H14.8V15H11.8Z" /></svg>
      <div className="ml-[12px] size-[5px] rounded-full bg-[#d4a50d]" />
      <span className="ml-[4px] text-[9px] text-[#50535f]">Live · 10000 candles</span>
      <div className="ml-[3px] flex items-center">
        <IconBtn><S size={16} vb="0 0 16 16" sw={1.1}><path d="M1 6 5.5 2.5 8 5 14 1M11.5 1H14.2M1.5 15V11.5H4V15M5.5 15V9.5H8V15M9.7 15V7H12.2V15M12.2 15V5.5H14.7V15H1.5" /></S></IconBtn>
        <IconBtn><S size={16} vb="0 0 16 16" sw={1.1}><path d="M8 1.5 12.5 5.5H3.5ZM3 8H13M8 14.5 12.5 10.5H3.5Z" /></S></IconBtn>
        <IconBtn><Zap size={16} fill="currentColor" strokeWidth={1} /></IconBtn>
        <IconBtn><S size={16} vb="0 0 16 16" sw={1.1}><rect x="1.2" y="4" width="13.6" height="10.2" rx="1" /><path d="M5.5 4V2H10.5V4" /></S></IconBtn>
        <IconBtn><GridIcon size={16} /></IconBtn>
        <IconBtn><Rewind size={14} strokeWidth={1.7} /></IconBtn>
        <IconBtn><Maximize size={17} strokeWidth={1.5} /></IconBtn>
        <IconBtn><Camera size={19} strokeWidth={1.5} /></IconBtn>
      </div>
      <div className="flex-1" />
      <div className="h-7 w-px bg-[#22262c]" /><div className="ml-[14px] h-7 w-px bg-[#22262c]" />
      <div className="ml-[17px] flex w-[101px]">
        <div className="flex w-[17px] items-center"><S size={17} vb="0 0 17 17" sw={1.4}><path d="M6.5 5.5V1.5H15.5V9.5H11.5M8.5 5.5H1.5V14.5H11.5V8M7.5 9.5 13 4M9.5 4H13V7.5" /></S></div>
        <AlarmClock size={19} strokeWidth={1.3} className="ml-[16px]" />
        <Square size={19} strokeWidth={1.3} className="ml-[15px]" />
      </div>
      <div className="mr-[14px] ml-[-2px] h-7 w-px bg-[#22262c]" />
      <GridIcon size={16} />
      <div className="relative ml-[17px]"><Bell size={18} strokeWidth={1.5} /><span className="absolute -top-[7px] left-[10px] flex size-[13px] items-center justify-center rounded-full bg-[#f23645] text-[9px] font-bold tracking-tight text-white">13</span></div>
      <div className="relative mr-2 ml-[14px]"><S size={22} vb="0 0 22 22" sw={1.6} className="block"><circle cx="11" cy="6.5" r="4.2" /><path d="M2.8 20C3.5 11 18.5 11 19.2 20" /></S><span className="absolute right-[-2px] bottom-0 size-[4px] rounded-full bg-[#10a873]" /></div>
    </header>
  );
}

const Tag = ({ cls, children }) => <div className={`absolute left-1 flex h-[22px] items-center rounded-[3px] border-l-2 bg-[#1c232f] pl-[5px] text-[10px] ${cls}`}>{children}</div>;

function ChartPane() {
  const drawing = [ArrowLineIcon, LineIcon, PathIcon, ParallelIcon, RayIcon, NoteIcon, FibIcon, TextIcon, CircleIcon, UpIcon, DownIcon, BrushIcon];
  return (
    <section className="relative w-[962px] shrink-0 bg-[#111]">
      <Chart />
      <div className="absolute top-[9px] left-2">
        <div className="flex h-[19px] items-center text-[13px] whitespace-nowrap text-[#d5d6e0]">
          BTCUSDT<span className="w-4 text-center text-[#4c4f5c]">·</span><span className="text-[#8d8f9c] [-webkit-text-stroke:0.3px]">15m</span><span className="w-4 text-center text-[#4c4f5c]">·</span><span className="text-[#5f616e]">Binance</span>
          <span className="ml-[14px] text-xs font-bold text-[#f23645]">74910.2</span><span className="ml-[8px] text-[11px] text-[#f03e50] [-webkit-text-stroke:0.3px]">-67.1 (-0.09%)</span>
        </div>
        <div className="flex">
          <ChevronDown size={12} strokeWidth={2.6} className="mt-[3px] text-[#8d8f9c]" />
          <div className="ml-[14px] text-xs text-[#bdbfcc]">
            <div className="-mt-[4px] flex h-[26px] items-center pt-px">mrD-RSI Premium</div>
            <div className="flex h-[26px] items-center gap-[6px] pt-px"><svg width="12" height="10" viewBox="0 0 12 10" fill="#f5a41c"><path d="M.5 1.5 3.3 4 6 .5 8.7 4 11.5 1.5 10.5 7H1.5ZM1.5 8H10.5V9.6H1.5Z" /></svg>mrD-Pullback Signals</div>
            <div className="flex h-[26px] items-center pt-px">mrD-Smart Ranges</div>
            <div className="flex h-[26px] items-center pt-px text-[#5f616b]">OI Profile (Fixed Range)<span className="ml-[10px] flex h-4 w-[42px] items-center justify-center rounded-[2px] border border-[#4f3e10] bg-[#1e1a10] text-[8px] font-bold tracking-[0.5px] text-[#7d6212]">SCRIPT</span></div>
          </div>
        </div>
      </div>
      <div className="absolute top-[37px] left-[431px] flex h-[42px] w-[479px] items-center rounded-[4px] border border-[#3d414d] bg-[#1e222d] pl-[9px] text-[#b3b5c2]">
        <svg width="6" height="12" fill="#5d606e">{[1, 6, 11].map((y) => [1, 5].map((x) => <circle key={x + "-" + y} cx={x} cy={y} r=".9" />))}</svg>
        <div className="ml-[5px] h-6 w-px bg-[#3d414d]" />
        <div className="ml-1 flex">
          {drawing.map((I, i) => <div key={i} className="flex w-8 justify-center"><I /></div>)}
          <div className="flex w-8 justify-center"><FibLetterIcon l="S" /></div>
          <div className="flex w-8 justify-center"><FibLIcon /></div>
        </div>
      </div>
      <Tag cls="top-[478px] w-[98px] border-[#f23645] text-[#b3b5c2]">PnL<span className="ml-[6px] text-[#10b981]">+50.35%</span><X size={13} strokeWidth={2.4} className="ml-[7.5px] text-[#8d8f9c]" /></Tag>
      <Tag cls="top-[584px] w-[43px] border-[#14704f] text-[#17674c]">TP1 ✓</Tag>
      <Tag cls="top-[890px] w-[92px] border-[#12c583] text-[#10b981]">TP2<span className="ml-[5px]">+79.83</span><X size={13} strokeWidth={2.4} className="ml-[8.5px] text-[#8d8f9c]" /></Tag>
    </section>
  );
}

function PositionsBar() {
  return (
    <div className="flex h-[34px] shrink-0 items-center border-t border-[#1d1e27] bg-[#0b0e14] pl-[3px] text-xs text-[#858794]">
      <div className="flex gap-[2px] [-webkit-text-stroke:0.3px]">
        {["Positions", "Open Orders", "Order History", "Trade History", "Assets"].map((t, i) => <div key={t} className={`flex h-7 items-center rounded-[4px] px-[10px] ${i === 0 ? "bg-[#2a2413] text-[#d4a50d]" : ""}`}>{t}</div>)}
      </div>
      <div className="flex-1" />
      <div className="flex h-6 w-[113px] items-center gap-[7px] rounded-[4px] border border-[#1c1f27] pl-[9px] text-[11px]"><span className="size-[8px] border border-[#7d7f8c]" />BTCUSDT only</div>
      <RotateCw size={12} strokeWidth={2.4} className="ml-[10px] text-[#9a9ca8]" />
      <div className="ml-[17px] size-[10px] border border-[#9a9ca8]" />
      <svg width="6" height="4" className="ml-[20px]"><path d="M3 0 6 3.5H0Z" fill="#9a9ca8" /></svg>
      <X size={13} className="mr-[10px] ml-[19px] text-[#9a9ca8]" />
    </div>
  );
}

function StatusBar() {
  const Dot = () => <span className="size-[6px] rounded-full bg-[#d4a50d]" />;
  const M = ({ w }) => <span className={`${w} text-center text-[#565967]`}>·</span>;
  return (
    <footer className="h-5 shrink-0 overflow-hidden border-t border-[#1a1b23] bg-[#0c0f12]">
      <div className="flex h-[23px] items-center pl-[5px] text-[11px] font-bold whitespace-nowrap text-[#c9cad6]">
        <span className="tracking-[0.2px]">MRD v2.0.10·30</span><M w="w-[27px]" />
        <div className="flex h-[19px] w-[113px] items-center gap-[5px] border border-[#73580f] bg-[#231e10] pl-[6px] text-[#d4a50d]">ALF MASTER<span className="text-[10px] font-normal text-[#a07d10]">350D</span></div>
        <span className="flex-1" />
        <span className="w-[30px] text-[10px] font-normal text-[#565967]">WS</span><span className="mr-[5px] text-[#d4a50d]">live</span><Dot /><M w="w-[22px]" />
        <span className="mr-[7px] text-[10px] font-normal text-[#565967]">BNB</span><span className="mr-[5px]">108 ms</span><Dot /><M w="w-[22px]" />
        <span className="w-[58px] text-[10px] font-normal text-[#565967]">FPS</span><span className="text-[#f23645]">7</span><M w="w-[25px]" />
        <span className="ml-[5px]">13:32:58</span><span className="ml-[6px] text-[10px] font-normal text-[#565967]">GMT-4</span>
        <svg width="4" height="3" className="ml-[8px]"><path d="M0 0H4L2 3Z" fill="#565967" /></svg><M w="w-[42px]" />
        <Settings size={13} strokeWidth={2} className="-ml-[5px] text-[#9a9ca8]" />
        <svg width="13" height="13" viewBox="0 0 24 24" fill="none" stroke="#9a9ca8" strokeWidth="2" className="mr-[10px] ml-[13px]"><circle cx="12" cy="12" r="10" /><path d="M9 9.2C9 5.5 15 5.8 15 9.2 15 11.5 12 11.5 12 14M12 16.5V18" /></svg>
      </div>
    </footer>
  );
}

export default function App() {
  return (
    <div className="flex h-[1310px] w-[1797px] flex-col overflow-hidden bg-[#0a0d0f] leading-none" style={{ fontFamily: MONO }}>
      <div className="flex h-[25px] shrink-0 items-center gap-2 bg-[#090d0f] pb-[3px] pl-[3px]">
        <span className="size-3 rounded-full bg-[#ff5f57]" /><span className="size-3 rounded-full bg-[#febc2e]" /><span className="size-3 rounded-full bg-[#28c840]" />
      </div>
      <TopBar />
      <main className="flex h-[1183px] shrink-0">
        <Sidebar />
        <ChartPane />
        <WhalesPanel />
      </main>
      <PositionsBar />
      <StatusBar />
    </div>
  );
}
